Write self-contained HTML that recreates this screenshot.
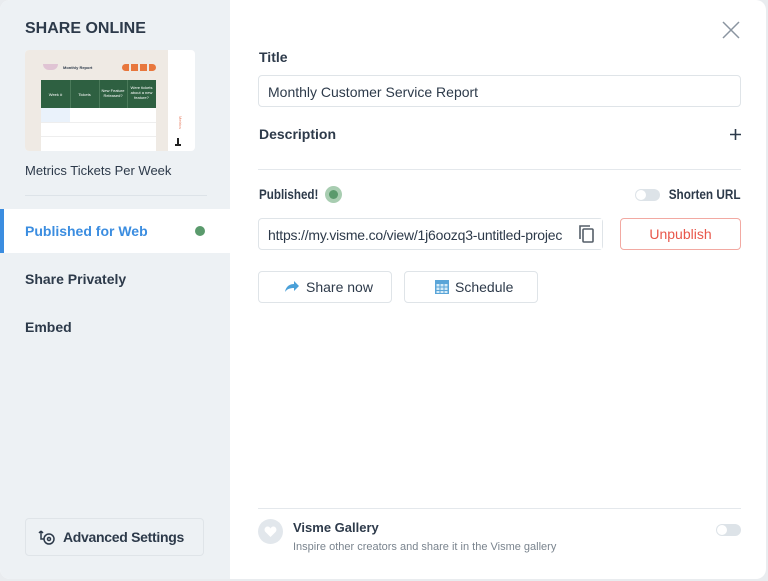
<html><head><style>
*{box-sizing:border-box;margin:0;padding:0}
body{width:768px;height:581px;background:#e9ecef;font-family:"Liberation Sans",sans-serif;color:#2d3a4a;position:relative;overflow:hidden}
.card{position:absolute;left:0;top:0;width:766px;height:579px;background:#fff;border-radius:10px;overflow:hidden}
.side{position:absolute;left:0;top:0;width:230px;height:579px;background:#edf1f4}
.abs{position:absolute}
.b{font-weight:bold}
.t{font-size:4px;color:#fff;text-align:center;position:absolute}
</style></head><body><div class="card">
<div class="side">
<div class="abs b" style="left:25px;top:20px;font-size:16px;color:#2d3a4a">SHARE ONLINE</div>
<div class="abs" style="left:25px;top:50px;width:170px;height:101px;background:#fff;border-radius:4px;overflow:hidden">
 <div class="abs" style="left:0;top:0;width:143px;height:101px;background:#efeae4"></div>
 <div class="abs" style="left:18px;top:14px;width:15px;height:6px;background:#e0c4d4;border-radius:0 0 8px 8px"></div>
 <div class="abs" style="left:38px;top:15px;font-size:4px;font-weight:bold">Monthly Report</div>
 <div class="abs" style="left:97px;top:14px;width:34px;height:7px;background:repeating-linear-gradient(90deg,#e8773d 0 7px,transparent 7px 9px);border-radius:4px"></div>
 <div class="abs" style="left:16px;top:30px;width:115px;height:28px;background:#2e6041"></div>
 <div class="abs" style="left:45px;top:30px;width:1px;height:28px;background:#4a7a5a"></div>
 <div class="abs" style="left:74px;top:30px;width:1px;height:28px;background:#4a7a5a"></div>
 <div class="abs" style="left:102px;top:30px;width:1px;height:28px;background:#4a7a5a"></div>
 <div class="t" style="left:16px;top:42px;width:29px">Week #</div>
 <div class="t" style="left:45px;top:42px;width:29px">Tickets</div>
 <div class="t" style="left:74px;top:38px;width:28px">New Feature Released?</div>
 <div class="t" style="left:102px;top:35px;width:29px">Were tickets about a new feature?</div>
 <div class="abs" style="left:16px;top:58px;width:115px;height:43px;background:#fff"></div>
 <div class="abs" style="left:16px;top:58px;width:29px;height:14px;background:#eaf2fb"></div>
 <div class="abs" style="left:16px;top:72px;width:115px;height:1px;background:#eee"></div>
 <div class="abs" style="left:16px;top:86px;width:115px;height:1px;background:#eee"></div>
 <div class="abs" style="left:149px;top:70px;font-size:4px;color:#e8876d;transform:rotate(90deg)">Metrics</div>
 <div class="abs" style="left:152px;top:88px;width:2px;height:8px;background:#222"></div>
 <div class="abs" style="left:150px;top:94px;width:6px;height:2px;background:#222"></div>
</div>
<div class="abs" style="left:25px;top:163px;font-size:13px">Metrics Tickets Per Week</div>
<div class="abs" style="left:25px;top:195px;width:182px;height:1px;background:#dde3e8"></div>
<div class="abs" style="left:0;top:209px;width:230px;height:44px;background:#fff"></div>
<div class="abs" style="left:0;top:209px;width:4px;height:44px;background:#3b8de0"></div>
<div class="abs b" style="left:25px;top:223px;font-size:14px;color:#3b8de0">Published for Web</div>
<div class="abs" style="left:195px;top:226px;width:10px;height:10px;border-radius:50%;background:#5a9a6c"></div>
<div class="abs b" style="left:25px;top:271px;font-size:14px">Share Privately</div>
<div class="abs b" style="left:25px;top:319px;font-size:14px">Embed</div>
<div class="abs" style="left:25px;top:518px;width:179px;height:38px;border:1px solid #dfe4e8;border-radius:4px"></div>
<svg class="abs" style="left:37px;top:527px" width="22" height="20" viewBox="0 0 22 20" fill="none" stroke="#2d3a4a" stroke-width="1.5"><path d="M4 4v8h3M4 4l-2 2M4 4l2 2"/><circle cx="12" cy="12" r="5"/><circle cx="12" cy="12" r="1.5"/></svg>
<div class="abs b" style="left:63px;top:529px;font-size:14px;letter-spacing:-0.3px">Advanced Settings</div>
</div>
<svg class="abs" style="left:722px;top:21px" width="18" height="18" viewBox="0 0 18 18" stroke="#8a95a0" stroke-width="1.5"><path d="M1 1L17 17M17 1L1 17"/></svg>
<div class="abs b" style="left:259px;top:49px;font-size:14px">Title</div>
<div class="abs" style="left:258px;top:75px;width:483px;height:32px;border:1px solid #dfe4e8;border-radius:4px;padding:8px 9px;font-size:14px">Monthly Customer Service Report</div>
<div class="abs b" style="left:259px;top:126px;font-size:14px">Description</div>
<svg class="abs" style="left:730px;top:129px" width="11" height="11" stroke="#2d3a4a" stroke-width="1.6"><path d="M5.5 0v11M0 5.5h11"/></svg>
<div class="abs" style="left:258px;top:169px;width:483px;height:1px;background:#e4e8ec"></div>
<div class="abs b" style="left:259px;top:186px;font-size:14px;white-space:nowrap;transform:scaleX(0.83);transform-origin:left">Published!</div>
<div class="abs" style="left:325px;top:186px;width:17px;height:17px;border-radius:50%;background:#a8cdb1"></div>
<div class="abs" style="left:329px;top:190px;width:9px;height:9px;border-radius:50%;background:#5a9a6c"></div>
<div class="abs" style="left:635px;top:189px;width:25px;height:12px;border-radius:6px;background:#dde3e8"></div>
<div class="abs" style="left:636px;top:190px;width:10px;height:10px;border-radius:50%;background:#fff"></div>
<div class="abs b" style="right:25px;top:186px;font-size:14px;white-space:nowrap;transform:scaleX(0.84);transform-origin:right">Shorten URL</div>
<div class="abs" style="left:258px;top:218px;width:345px;height:32px;border:1px solid #dfe4e8;border-radius:4px;padding:8px 9px;font-size:14px;white-space:nowrap;overflow:hidden;letter-spacing:-0.2px">https://my.visme.co/view/1j6oozq3-untitled-projec</div>
<div class="abs" style="left:574px;top:219px;width:28px;height:30px;background:#fff"></div>
<svg class="abs" style="left:578px;top:224px" width="18" height="20" viewBox="0 0 18 20" fill="none" stroke="#555e68" stroke-width="1.6"><path d="M2 15V2h10"/><rect x="5" y="5" width="10" height="13" rx="1"/></svg>
<div class="abs" style="left:620px;top:218px;width:121px;height:32px;border:1px solid #f2a9a2;border-radius:4px;text-align:center;line-height:30px;font-size:14px;color:#e8574b">Unpublish</div>
<div class="abs" style="left:258px;top:271px;width:134px;height:32px;border:1px solid #dfe4e8;border-radius:4px;font-size:14px;line-height:30px;padding-left:47px">Share now</div>
<svg class="abs" style="left:284px;top:280px" width="16" height="13" viewBox="0 0 16 13"><path d="M1 12C2 6 6 4 10 4V1l5 5-5 5V8C6 8 3 9 1 12z" fill="#4aa0d8"/></svg>
<div class="abs" style="left:404px;top:271px;width:134px;height:32px;border:1px solid #dfe4e8;border-radius:4px;font-size:14px;line-height:30px;padding-left:50px">Schedule</div>
<svg class="abs" style="left:435px;top:280px" width="14" height="14" viewBox="0 0 14 14"><rect x="0" y="0" width="14" height="14" fill="#5aa5d8"/><g fill="#d6ecf8"><rect x="1.5" y="4" width="3" height="2.5"/><rect x="5.5" y="4" width="3" height="2.5"/><rect x="9.5" y="4" width="3" height="2.5"/><rect x="1.5" y="7.5" width="3" height="2.5"/><rect x="5.5" y="7.5" width="3" height="2.5"/><rect x="9.5" y="7.5" width="3" height="2.5"/><rect x="1.5" y="11" width="3" height="2"/><rect x="5.5" y="11" width="3" height="2"/><rect x="9.5" y="11" width="3" height="2"/></g></svg>
<div class="abs" style="left:258px;top:508px;width:483px;height:1px;background:#e4e8ec"></div>
<div class="abs" style="left:258px;top:519px;width:25px;height:25px;border-radius:50%;background:#e2e7ec"></div>
<svg class="abs" style="left:264px;top:526px" width="13" height="12" viewBox="0 0 13 12"><path d="M6.5 11L1.5 6C-0.5 4 1 0.5 3.5 0.5c1.5 0 2.5 1 3 2 .5-1 1.5-2 3-2 2.5 0 4 3.5 2 5.5z" fill="#fff"/></svg>
<div class="abs b" style="left:293px;top:520px;font-size:13px">Visme Gallery</div>
<div class="abs" style="left:293px;top:541px;font-size:11px;color:#7a848e">Inspire other creators and share it in the Visme gallery</div>
<div class="abs" style="left:716px;top:524px;width:25px;height:12px;border-radius:6px;background:#dde3e8"></div>
<div class="abs" style="left:717px;top:525px;width:10px;height:10px;border-radius:50%;background:#fff"></div>
</div></body></html>
